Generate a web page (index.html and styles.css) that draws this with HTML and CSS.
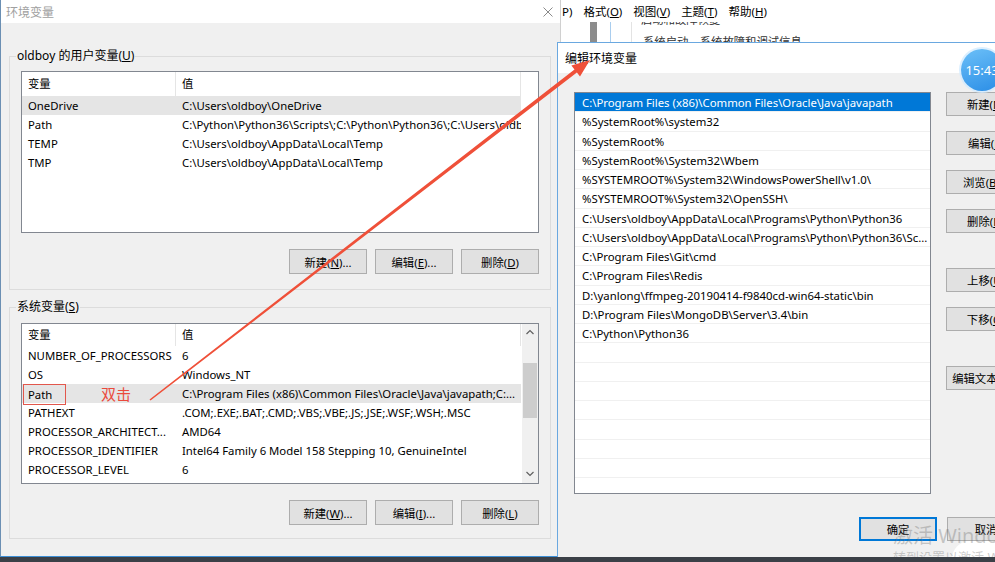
FILE: index.html
```html
<!DOCTYPE html>
<html lang="zh-CN">
  <head>
    <meta charset="UTF-8" />
    <title>环境变量</title>
    <link rel="stylesheet" href="styles.css">
  </head>
  <body>
    <!-- 环境变量 dialog -->
    <div class="window env">
      <div class="titlebar">
        <span class="title">环境变量</span>
        <svg class="close" width="10" height="10" viewBox="0 0 10 10"><path d="M0.5 0.5 L9.5 9.5 M9.5 0.5 L0.5 9.5" stroke="#8a8a8a" stroke-width="1" fill="none"/></svg>
      </div>

      <div class="group user-group">
        <span class="group-label">oldboy 的用户变量(<u>U</u>)</span>
        <div class="list user-list">
          <div class="list-body">
            <div class="list-head">
              <div class="cell">变量</div>
              <div class="cell">值</div>
            </div>
            <div class="row sel"><div class="cell">OneDrive</div><div class="cell">C:\Users\oldboy\OneDrive</div></div>
            <div class="row"><div class="cell">Path</div><div class="cell">C:\Python\Python36\Scripts\;C:\Python\Python36\;C:\Users\oldboy\AppData\Local</div></div>
            <div class="row"><div class="cell">TEMP</div><div class="cell">C:\Users\oldboy\AppData\Local\Temp</div></div>
            <div class="row"><div class="cell">TMP</div><div class="cell">C:\Users\oldboy\AppData\Local\Temp</div></div>
          </div>
        </div>
        <div class="btn-row">
          <button class="btn">新建(<u>N</u>)...</button>
          <button class="btn">编辑(<u>E</u>)...</button>
          <button class="btn">删除(<u>D</u>)</button>
        </div>
      </div>

      <div class="group sys-group">
        <span class="group-label">系统变量(<u>S</u>)</span>
        <div class="list sys-list">
          <div class="list-body">
            <div class="list-head short">
              <div class="cell">变量</div>
              <div class="cell">值</div>
            </div>
            <div class="row"><div class="cell">NUMBER_OF_PROCESSORS</div><div class="cell">6</div></div>
            <div class="row"><div class="cell">OS</div><div class="cell">Windows_NT</div></div>
            <div class="row sel"><div class="cell marked"><span class="mark">Path</span><span class="hint">双击</span></div><div class="cell">C:\Program Files (x86)\Common Files\Oracle\Java\javapath;C:...</div></div>
            <div class="row"><div class="cell">PATHEXT</div><div class="cell">.COM;.EXE;.BAT;.CMD;.VBS;.VBE;.JS;.JSE;.WSF;.WSH;.MSC</div></div>
            <div class="row"><div class="cell">PROCESSOR_ARCHITECT...</div><div class="cell">AMD64</div></div>
            <div class="row"><div class="cell">PROCESSOR_IDENTIFIER</div><div class="cell">Intel64 Family 6 Model 158 Stepping 10, GenuineIntel</div></div>
            <div class="row"><div class="cell">PROCESSOR_LEVEL</div><div class="cell">6</div></div>
          </div>
          <div class="scroll">
            <svg class="arrow" width="16" height="17" viewBox="0 0 16 17"><path d="M4.5 10 L8 6.5 L11.5 10" stroke="#606060" stroke-width="1.2" fill="none"/></svg>
            <div class="thumb"></div>
            <svg class="arrow down" width="16" height="17" viewBox="0 0 16 17"><path d="M4.5 7 L8 10.5 L11.5 7" stroke="#606060" stroke-width="1.2" fill="none"/></svg>
          </div>
        </div>
        <div class="btn-row">
          <button class="btn">新建(<u>W</u>)...</button>
          <button class="btn">编辑(<u>I</u>)...</button>
          <button class="btn">删除(<u>L</u>)</button>
        </div>
      </div>
    </div>

    <!-- window behind, only its menu shows -->
    <div class="window notepad">
      <div class="menubar">
        <span>P)</span>
        <span>格式(<u>O</u>)</span>
        <span>视图(<u>V</u>)</span>
        <span>主题(<u>T</u>)</span>
        <span>帮助(<u>H</u>)</span>
      </div>
      <div class="np-content">
        <div class="np-gap"></div>
        <div class="np-bar"></div>
        <div class="np-side"></div>
        <div class="np-text">
          <div>启动和故障恢复</div>
          <div class="indent">系统启动、系统故障和调试信息</div>
        </div>
      </div>
    </div>

    <!-- 编辑环境变量 dialog -->
    <div class="window edit">
      <div class="titlebar">
        <span>编辑环境变量</span>
      </div>
      <div class="edit-main">
        <div class="path-list">
          <div class="item sel">C:\Program Files (x86)\Common Files\Oracle\Java\javapath</div>
          <div class="item">%SystemRoot%\system32</div>
          <div class="item">%SystemRoot%</div>
          <div class="item">%SystemRoot%\System32\Wbem</div>
          <div class="item">%SYSTEMROOT%\System32\WindowsPowerShell\v1.0\</div>
          <div class="item">%SYSTEMROOT%\System32\OpenSSH\</div>
          <div class="item">C:\Users\oldboy\AppData\Local\Programs\Python\Python36</div>
          <div class="item">C:\Users\oldboy\AppData\Local\Programs\Python\Python36\Sc...</div>
          <div class="item">C:\Program Files\Git\cmd</div>
          <div class="item">C:\Program Files\Redis</div>
          <div class="item">D:\yanlong\ffmpeg-20190414-f9840cd-win64-static\bin</div>
          <div class="item">D:\Program Files\MongoDB\Server\3.4\bin</div>
          <div class="item">C:\Python\Python36</div>
          <div class="item"></div>
          <div class="item"></div>
          <div class="item"></div>
          <div class="item"></div>
          <div class="item"></div>
          <div class="item"></div>
          <div class="item"></div>
          <div class="item"></div>
        </div>
        <div class="side">
          <button class="btn side-btn">新建(<u>N</u>)</button>
          <button class="btn side-btn">编辑(<u>E</u>)</button>
          <button class="btn side-btn">浏览(<u>B</u>)...</button>
          <button class="btn side-btn">删除(<u>D</u>)</button>
          <button class="btn side-btn spaced">上移(<u>U</u>)</button>
          <button class="btn side-btn">下移(<u>O</u>)</button>
          <button class="btn side-btn spaced">编辑文本(<u>T</u>)...</button>
        </div>
      </div>
      <div class="edit-foot">
        <button class="btn default">确定</button>
        <button class="btn">取消</button>
      </div>
    </div>

    <div class="clock">15:43</div>
    <div class="blob"></div>
    <div class="activate">
      <div>激活 Windows</div>
      <div class="small">转到设置以激活 Windows。</div>
    </div>
    <div class="taskbar"></div>

    <!-- red annotation arrow -->
    <svg class="annot" width="995" height="562" viewBox="0 0 995 562">
      <polygon points="149.5,399.4 574.5,69.4 571.4,65.5 590,60 580,76.5 576.9,72.6 150.5,400.6" fill="#ef5039"/>
    </svg>
  </body>
</html>
```

FILE: styles.css
```css
body {
  margin: 0;
  width: 995px;
  height: 562px;
  overflow: hidden;
  position: relative;
  background: #f0f0f0;
  font-family: "Noto Sans", "Noto Sans CJK SC", sans-serif;
  font-size: 11.35px;
  color: #000;
}
u {
  text-decoration: underline;
  text-underline-offset: 1px;
}
.window {
  position: absolute;
  background: #f0f0f0;
  box-sizing: border-box;
}
.titlebar {
  display: flex;
  align-items: center;
  justify-content: space-between;
  background: #fff;
}

/* left dialog */
.env {
  left: 0;
  top: 0;
  width: 560px;
  height: 557px;
  border-left: 1px solid #6b8fb3;
  border-bottom: 1px solid #3d8fd6;
}
.env .titlebar {
  height: 23px;
  padding: 0 7px 0 5px;
}
.env .title {
  color: #a0a0a0;
  font-size: 12px;
}
.group {
  position: relative;
  margin: 0 9px 0 8px;
  border: 1px solid #dcdcdc;
  padding: 14px 11px 15px;
}
.user-group {
  margin-top: 33px;
}
.sys-group {
  margin-top: 17px;
  padding-top: 15px;
  padding-bottom: 13px;
}
.group-label {
  position: absolute;
  top: -9px;
  left: 6px;
  padding: 0 1px;
  line-height: 16px;
  background: #f0f0f0;
  font-size: 12px;
}
.list {
  display: flex;
  background: #fff;
  border: 1px solid #828790;
  box-sizing: border-box;
}
.user-list {
  height: 162px;
}
.sys-list {
  height: 161px;
}
.list-body {
  flex: 1;
  overflow: hidden;
}
.list-head,
.row {
  display: grid;
  grid-template-columns: 154px 345px;
  width: 499px;
}
.list-head {
  height: 24px;
  line-height: 24px;
}
.list-head.short {
  height: 22px;
  line-height: 21px;
}
.list-head .cell {
  border-right: 1px solid #e5e5e5;
}
.row {
  height: 19px;
  line-height: 19px;
}
.row.sel {
  background: #e5e5e5;
}
.cell {
  padding-left: 6px;
  white-space: nowrap;
  overflow: hidden;
}
.cell.marked {
  overflow: visible;
  display: flex;
  align-items: center;
}
.mark {
  box-sizing: border-box;
  height: 21px;
  width: 43px;
  margin-left: -5px;
  padding-left: 4px;
  border: 1px solid #e2574c;
  line-height: 19px;
}
.hint {
  margin-left: 35px;
  color: #ea4a3c;
  font-size: 15px;
}
.scroll {
  width: 16px;
  display: flex;
  flex-direction: column;
  background: #f0f0f0;
}
.scroll .arrow {
  display: block;
}
.scroll .down {
  margin-top: auto;
  margin-bottom: 1px;
}
.thumb {
  margin: 22px 1px 0;
  height: 55px;
  background: #cdcdcd;
}
.btn-row {
  display: flex;
  justify-content: flex-end;
  gap: 8px;
  margin-top: 16px;
}
.btn {
  width: 78px;
  height: 25px;
  padding: 0;
  background: #e1e1e1;
  border: 1px solid #adadad;
  font: inherit;
  color: #000;
  white-space: nowrap;
}

/* window in the back */
.notepad {
  left: 560px;
  top: 0;
  width: 435px;
  height: 42px;
  background: #fff;
  border-left: 1px solid #d0d0d0;
  overflow: hidden;
}
.menubar {
  height: 22px;
  display: flex;
  align-items: center;
  gap: 11px;
  padding-left: 1px;
  font-size: 11.5px;
}
.np-content {
  display: flex;
  height: 20px;
  overflow: hidden;
}
.np-gap {
  width: 29px;
}
.np-bar {
  width: 7px;
  background: #8c8c8c;
}
.np-side {
  width: 33px;
  border-left: 1px solid #fff;
  box-shadow: inset 12px 0 0 #fff, inset 13px 0 0 #a9cdee;
  border-right: 1px solid #e3e3e3;
}
.np-text {
  margin-top: -13px;
  padding-left: 9px;
  line-height: 22px;
  color: #333;
  white-space: nowrap;
}
.np-text .indent {
  padding-left: 2px;
}

/* edit dialog */
.edit {
  left: 557px;
  top: 42px;
  width: 470px;
  height: 515px;
  border-left: 1px solid #6aa8e0;
  border-top: 1px solid #6aa8e0;
}
.edit .titlebar {
  height: 30px;
  padding-left: 7px;
  font-size: 12px;
}
.edit-main {
  display: flex;
  align-items: flex-start;
  gap: 15px;
  padding: 19px 0 0 16px;
}
.path-list {
  width: 357px;
  height: 402px;
  flex-shrink: 0;
  background: #fff;
  border: 1px solid #828790;
  box-sizing: border-box;
  overflow: hidden;
}
.item {
  height: 19.25px;
  line-height: 19px;
  padding-left: 7px;
  border-bottom: 1px solid #f0f0f0;
  box-sizing: border-box;
  white-space: nowrap;
}
.item.sel {
  background: #0078d7;
  color: #fff;
}
.side {
  display: flex;
  flex-direction: column;
  gap: 15px;
}
.side-btn {
  width: 80px;
  height: 24px;
}
.side-btn.spaced {
  margin-top: 20px;
}
.edit-foot {
  display: flex;
  gap: 10px;
  margin: 23px 0 0 301px;
}
.edit-foot .btn {
  height: 24px;
}
.btn.default {
  border: 2px solid #0078d7;
}

/* overlays */
.clock {
  position: absolute;
  left: 961px;
  top: 49px;
  width: 42px;
  height: 42px;
  border-radius: 50%;
  background: linear-gradient(160deg, #6cc0f8, #2a8de6);
  box-shadow: 0 0 0 2px rgba(210, 235, 255, 0.8);
  color: #fff;
  font-size: 13px;
  display: flex;
  align-items: center;
  justify-content: center;
}
.blob {
  position: absolute;
  left: 952px;
  top: 541px;
  width: 60px;
  height: 30px;
  background: #fff;
  border-radius: 18px 0 0 0;
}
.activate {
  position: absolute;
  left: 893px;
  top: 523px;
  color: rgba(110, 110, 110, 0.35);
  font-size: 20px;
  line-height: 26px;
  white-space: nowrap;
}
.activate .small {
  font-size: 13px;
  line-height: 16px;
}
.taskbar {
  position: absolute;
  left: 0;
  right: 0;
  bottom: 0;
  height: 5px;
  background: #3b4047;
}
.annot {
  position: absolute;
  left: 0;
  top: 0;
  pointer-events: none;
}
```
